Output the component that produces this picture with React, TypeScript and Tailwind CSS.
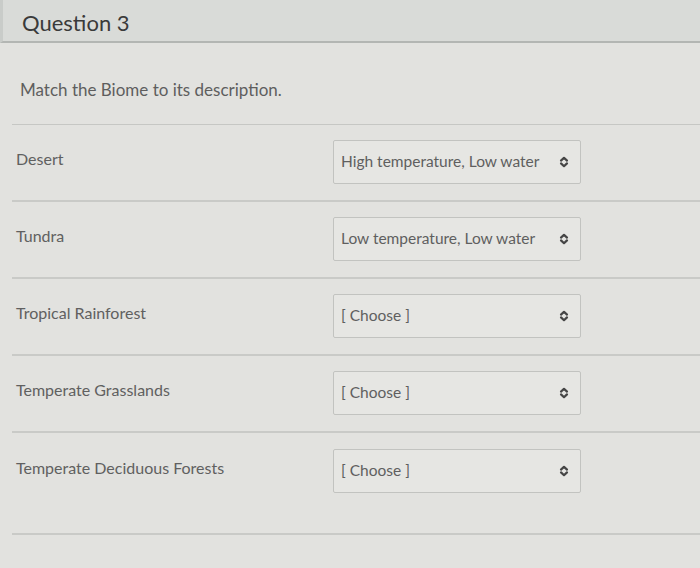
import React from "react";

const rows = [
  { label: "Desert", value: "High temperature, Low water" },
  { label: "Tundra", value: "Low temperature, Low water" },
  { label: "Tropical Rainforest", value: "[ Choose ]" },
  { label: "Temperate Grasslands", value: "[ Choose ]" },
  { label: "Temperate Deciduous Forests", value: "[ Choose ]" },
];

function Chevrons() {
  return (
    <svg width="10" height="12" viewBox="0 0 10 12" fill="none" stroke="#454545" strokeWidth="2.2" strokeLinecap="round" strokeLinejoin="round">
      <path d="M2 4.6 L5 1.8 L8 4.6" />
      <path d="M2 7.4 L5 10.2 L8 7.4" />
    </svg>
  );
}

export default function App() {
  return (
    <div className="w-[700px] h-[568px] overflow-hidden bg-[#e2e2df] text-[#5a5a5a]" style={{ fontFamily: "Lato, 'Open Sans', sans-serif" }}>
      <div className="h-[43px] bg-[#d9dbd8] border-b-2 border-[#b3b6b3] border-l-[3px] border-l-[#c9ccc9] flex items-center pl-[19px] pt-[5px]">
        <span className="text-[22px] text-[#3a3a3a] leading-none">Question 3</span>
      </div>
      <div className="pl-[20px] pt-[38px] h-[81px] text-[17px] text-[#5e5e5e] leading-none">
        Match the Biome to its description.
      </div>
      <div className="ml-[12px] border-t border-[#c6c7c4]">
        {rows.map((r, i) => (
          <div
            key={r.label}
            className={`flex items-start border-b-2 border-[#c9cac7] ${i === 4 ? "pt-[16px] pb-[40px]" : "pt-[15px] pb-[16px]"}`}
          >
            <div className="w-[321px] pt-[11px] pl-[4px] text-[16px] text-[#606060] leading-none">{r.label}</div>
            <div className="w-[248px] h-[44px] border border-[#c2c3c0] rounded-[2px] bg-[#e6e6e3] flex items-center justify-between pl-[7px] pr-[11px]">
              <span className="text-[15.5px] text-[#5f5f5f] leading-none">{r.value}</span>
              <Chevrons />
            </div>
          </div>
        ))}
      </div>
    </div>
  );
}
